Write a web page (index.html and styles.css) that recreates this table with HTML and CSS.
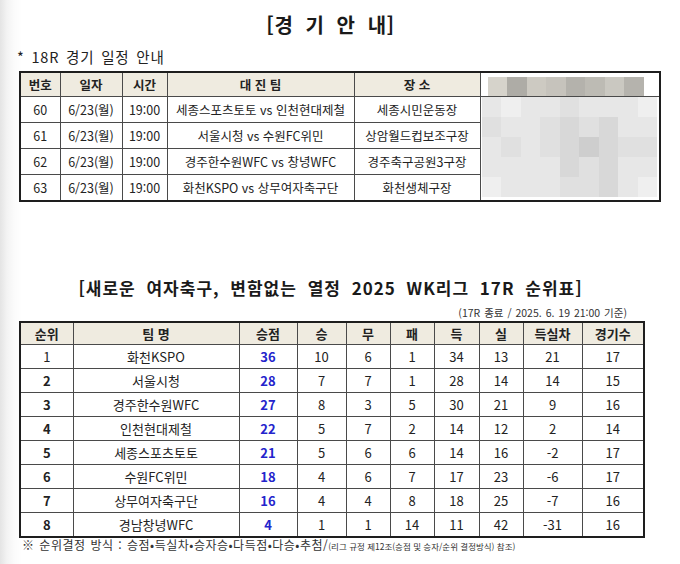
FILE: index.html
```html
<!DOCTYPE html>
<html lang="ko">
<head>
<meta charset="utf-8">
<title>경기 안내</title>
<link rel="stylesheet" href="styles.css">
</head>
<body>
<div class="page">
  <h1 class="title">[경&nbsp; 기&nbsp; 안&nbsp; 내]</h1>
  <p class="note">* 18R 경기 일정 안내</p>
  <table class="tbl sched">
    <colgroup>
      <col class="c-no"><col class="c-date"><col class="c-time"><col class="c-match"><col class="c-place"><col class="c-hide">
    </colgroup>
    <thead>
      <tr>
        <th>번호</th><th>일자</th><th>시간</th><th>대 진 팀</th><th>장 소</th>
        <th class="blur-head"><div class="mosaic-head"><span class="h1"></span><span class="h2"></span><span class="h3"></span><span class="h4"></span><span class="h5"></span><span class="h6"></span><span class="h7"></span><span class="h8"></span></div></th>
      </tr>
    </thead>
    <tbody>
      <tr>
        <td>60</td><td>6/23(월)</td><td>19:00</td><td>세종스포츠토토 vs 인천현대제철</td><td>세종시민운동장</td>
        <td class="blur-body" rowspan="4">
          <div class="mosaic">
            <span class="m1"></span><span class="m0"></span><span class="m1"></span><span class="m1"></span><span class="m2"></span><span class="m1"></span><span class="m1"></span><span class="m1"></span><span class="m0"></span>
            <span class="m2"></span><span class="m1"></span><span class="m1"></span><span class="m2"></span><span class="m3"></span><span class="m2"></span><span class="m3"></span><span class="m1"></span><span class="m1"></span>
            <span class="m1"></span><span class="m2"></span><span class="m1"></span><span class="m2"></span><span class="m3"></span><span class="m4"></span><span class="m3"></span><span class="m2"></span><span class="m2"></span>
            <span class="m1"></span><span class="m1"></span><span class="m1"></span><span class="m1"></span><span class="m3"></span><span class="m2"></span><span class="m3"></span><span class="m1"></span><span class="m1"></span>
            <span class="m0"></span><span class="m1"></span><span class="m1"></span><span class="m1"></span><span class="m2"></span><span class="m2"></span><span class="m3"></span><span class="m1"></span><span class="m0"></span>
          </div>
        </td>
      </tr>
      <tr><td>61</td><td>6/23(월)</td><td>19:00</td><td>서울시청 vs 수원FC위민</td><td>상암월드컵보조구장</td></tr>
      <tr><td>62</td><td>6/23(월)</td><td>19:00</td><td>경주한수원WFC vs 창녕WFC</td><td>경주축구공원3구장</td></tr>
      <tr><td>63</td><td>6/23(월)</td><td>19:00</td><td>화천KSPO vs 상무여자축구단</td><td>화천생체구장</td></tr>
    </tbody>
  </table>

  <h2 class="title2">[새로운 여자축구, 변함없는 열정 2025 WK리그 17R 순위표]</h2>
  <p class="basis">(17R 종료 / 2025. 6. 19 21:00 기준)</p>
  <table class="tbl rank">
    <colgroup>
      <col class="r-rank"><col class="r-team"><col class="r-pts"><col class="r-w"><col class="r-d"><col class="r-l"><col class="r-gf"><col class="r-ga"><col class="r-gd"><col class="r-gp">
    </colgroup>
    <thead>
      <tr><th>순위</th><th>팀 명</th><th>승점</th><th>승</th><th>무</th><th>패</th><th>득</th><th>실</th><th>득실차</th><th>경기수</th></tr>
    </thead>
    <tbody>
      <tr><td>1</td><td>화천KSPO</td><td class="pts">36</td><td>10</td><td>6</td><td>1</td><td>34</td><td>13</td><td>21</td><td>17</td></tr>
      <tr><td class="b">2</td><td>서울시청</td><td class="pts">28</td><td>7</td><td>7</td><td>1</td><td>28</td><td>14</td><td>14</td><td>15</td></tr>
      <tr><td class="b">3</td><td>경주한수원WFC</td><td class="pts">27</td><td>8</td><td>3</td><td>5</td><td>30</td><td>21</td><td>9</td><td>16</td></tr>
      <tr><td class="b">4</td><td>인천현대제철</td><td class="pts">22</td><td>5</td><td>7</td><td>2</td><td>14</td><td>12</td><td>2</td><td>14</td></tr>
      <tr><td class="b">5</td><td>세종스포츠토토</td><td class="pts">21</td><td>5</td><td>6</td><td>6</td><td>14</td><td>16</td><td>-2</td><td>17</td></tr>
      <tr><td class="b">6</td><td>수원FC위민</td><td class="pts">18</td><td>4</td><td>6</td><td>7</td><td>17</td><td>23</td><td>-6</td><td>17</td></tr>
      <tr><td class="b">7</td><td>상무여자축구단</td><td class="pts">16</td><td>4</td><td>4</td><td>8</td><td>18</td><td>25</td><td>-7</td><td>16</td></tr>
      <tr><td class="b">8</td><td>경남창녕WFC</td><td class="pts">4</td><td>1</td><td>1</td><td>14</td><td>11</td><td>42</td><td>-31</td><td>16</td></tr>
    </tbody>
  </table>
  <p class="foot">※ 순위결정 방식 : 승점•득실차•승자승•다득점•다승•추첨/<span class="small">(리그 규정 제12조(승점 및 승자/순위 결정방식) 참조)</span></p>
</div>
</body>
</html>
```

FILE: styles.css
```css
* { box-sizing: border-box; }
html, body { margin: 0; padding: 0; }
body {
  width: 680px;
  height: 564px;
  overflow: hidden;
  background: linear-gradient(to right, #e4e4e4 0, #f3f3f3 7px, #fbfbfb 14px, #ffffff 22px);
  font-family: "Noto Sans CJK KR", "Noto Sans", sans-serif;
  color: #222;
}
.page { padding: 13px 0 0 19px; }

.title {
  margin: 0;
  width: 623px;
  text-align: center;
  font-size: 20px;
  line-height: 24px;
  letter-spacing: 0.5px;
  font-weight: 700;
  color: #1a1a1a;
}
.note {
  margin: 11px 0 0 -2px;
  font-size: 14.5px;
  line-height: 18px;
  letter-spacing: 0.8px;
  word-spacing: 2px;
  color: #222;
}

.tbl {
  border-collapse: collapse;
  table-layout: fixed;
  border: 2px solid #1e1e1e;
  text-align: center;
}
.tbl th, .tbl td {
  border: 1px solid #4a4a4a;
  padding: 0;
  white-space: nowrap;
  overflow: hidden;
}
.tbl th {
  background: #efebe0;
  font-weight: 700;
  color: #222;
}

.sched { margin-top: 5px; width: 641px; font-size: 12.5px; }
.sched th { height: 24px; font-size: 12.5px; }
.sched td { height: 26px; }
.c-no { width: 40px; }
.c-date { width: 62px; }
.c-time { width: 45px; }
.c-match { width: 187px; }
.c-place { width: 126px; }
.c-hide { width: 180px; }

.sched th.blur-head { background: #fff; padding: 4px 15px 0 7px; vertical-align: top; }
.mosaic-head { display: grid; grid-template-columns: repeat(8, 1fr); height: 19px; }
.mosaic-head span { display: block; }
.h1 { background: #d6d3cb; }
.h2 { background: #aeaca6; }
.h3 { background: #cdcac2; }
.h4 { background: #c6c3bc; }
.h5 { background: #b4b2ac; }
.h6 { background: #bdbbb4; }
.h7 { background: #cac8c1; }
.h8 { background: #b5b3ad; }

.sched td.blur-body { padding: 0 2px 1px 1px; vertical-align: top; }
.mosaic { display: grid; grid-template-columns: repeat(9, 1fr); grid-template-rows: repeat(5, 20px); }
.mosaic span { display: block; }
.m0 { background: #efefef; }
.m1 { background: #e7e7e7; }
.m2 { background: #e0e0e0; }
.m3 { background: #d8d8d8; }
.m4 { background: #cecece; }

.title2 {
  margin: 75px 0 0 0;
  width: 623px;
  text-align: center;
  font-size: 17px;
  line-height: 22px;
  letter-spacing: 1px;
  word-spacing: 5px;
  font-weight: 700;
  color: #1a1a1a;
}
.basis {
  margin: 7px 0 0 0;
  width: 608px;
  text-align: right;
  font-size: 10.5px;
  line-height: 14px;
  letter-spacing: 0;
  word-spacing: 1px;
  color: #333;
}

.rank { margin-top: 1px; width: 624px; font-size: 13px; }
.rank th { height: 23px; font-size: 13px; }
.rank td { height: 24px; }
.rank td.b { font-weight: 700; }
.rank td.pts { font-weight: 700; color: #2424cc; }
.r-rank { width: 53px; }
.r-team { width: 166px; }
.r-pts { width: 58px; }
.r-w { width: 49px; }
.r-d { width: 44px; }
.r-l { width: 44px; }
.r-gf { width: 45px; }
.r-ga { width: 44px; }
.r-gd { width: 59px; }
.r-gp { width: 62px; }

.foot {
  margin: 0 0 0 3px;
  font-size: 12px;
  line-height: 14px;
  letter-spacing: 0.5px;
  word-spacing: 1px;
  color: #333;
  white-space: nowrap;
}
.foot .small { font-size: 8.5px; letter-spacing: 0; word-spacing: 0; }
```
